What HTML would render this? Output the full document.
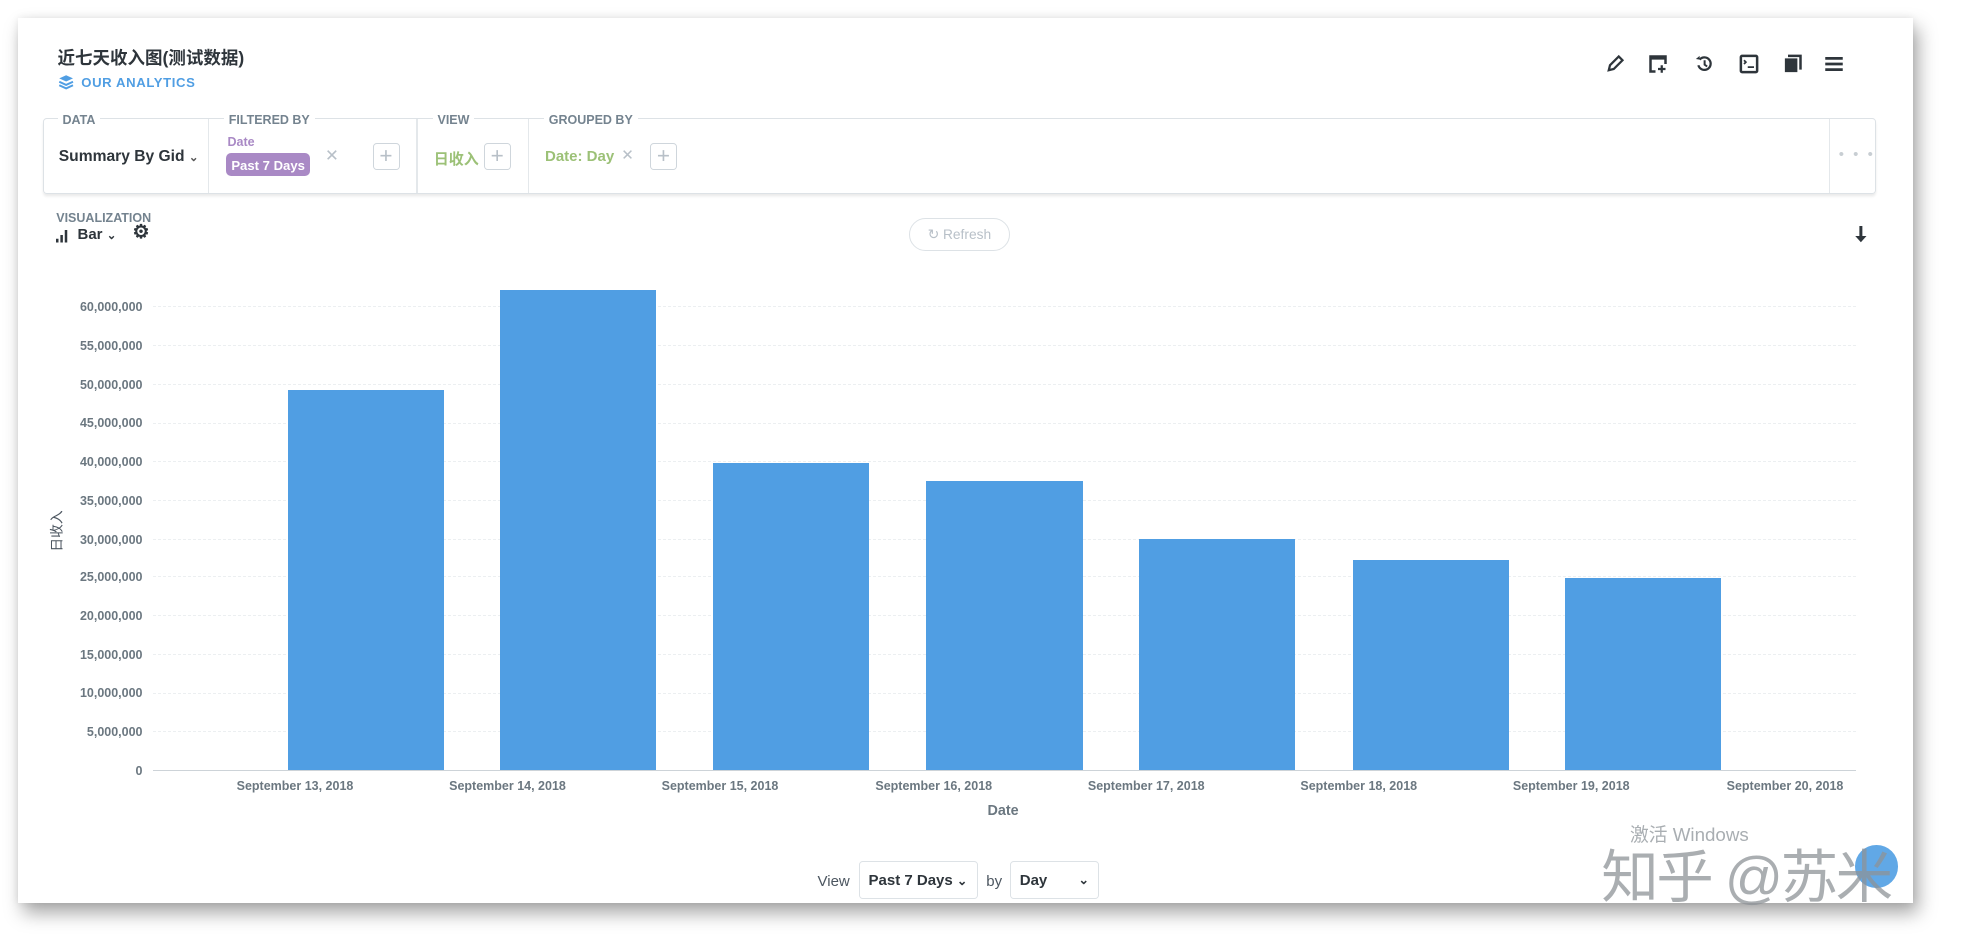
<!DOCTYPE html>
<html><head><meta charset="utf-8"><style>
html,body{margin:0;padding:0;background:#fff;width:1961px;height:951px;overflow:hidden}
#w{zoom:1.25;position:relative;width:1569px;height:761px;font-family:"Liberation Sans","Noto Sans CJK SC",sans-serif;color:#2e353b}
.a{position:absolute;white-space:nowrap}
.card{position:absolute;left:14px;top:14px;width:1516px;height:708px;background:#fff;box-shadow:4px 8px 14px rgba(0,0,0,.35),0 0 6px rgba(0,0,0,.08)}
.lbl{font-size:10px;font-weight:bold;color:#74838f;background:#fff;padding:0 4px}
.plus{position:absolute;width:20px;height:20px;border:1px solid #cfd6dc;border-radius:3px;color:#b8c0c8;font-size:18px;line-height:19px;text-align:center;background:#fff}
.yl{position:absolute;right:1455px;font-size:10px;font-weight:bold;color:#6b7780;text-align:right}
.xl{position:absolute;font-size:10px;font-weight:bold;color:#6b7780;transform:translateX(-50%);top:623px}
.bar{position:absolute;background:#509ee3;width:125px;bottom:145px}
.grid{position:absolute;left:122px;width:1363px;border-top:1px dashed #eceff1}
.ic{position:absolute;top:43px}
</style></head><body><div id="w">
<div class="card"></div>
<div class="a" style="left:46px;top:36px;font-size:14px;font-weight:bold;color:#2e353b">近七天收入图(测试数据)</div>
<svg class="a" style="left:46px;top:59px" width="13" height="13" viewBox="0 0 13 13"><path d="M6.5 1L12 3.5 6.5 6 1 3.5z" fill="#509ee3"/><path d="M1 6.2L6.5 8.7 12 6.2M1 9L6.5 11.5 12 9" stroke="#509ee3" stroke-width="1.6" fill="none"/></svg>
<div class="a" style="left:65px;top:60px;font-size:10.5px;font-weight:bold;color:#509ee3;letter-spacing:.5px">OUR ANALYTICS</div>
<svg class="ic" style="left:1284px" width="16" height="16" viewBox="0 0 16 16"><path d="M3 13l1-4 7-7 3 3-7 7z" fill="none" stroke="#2e353b" stroke-width="1.8"/></svg>
<svg class="ic" style="left:1318px" width="16" height="16" viewBox="0 0 16 16"><path d="M6 14H2V2h12v6" fill="none" stroke="#2e353b" stroke-width="2"/><path d="M2 3h12" stroke="#2e353b" stroke-width="3"/><path d="M11 9v6M8 12h6" stroke="#2e353b" stroke-width="1.8"/></svg>
<svg class="ic" style="left:1355px" width="16" height="16" viewBox="0 0 16 16"><path d="M3.5 9A5 5 0 1 0 4.5 4.5" fill="none" stroke="#2e353b" stroke-width="1.8"/><path d="M1.5 4l3 .5 0-3z" fill="#2e353b"/><path d="M8.5 5v3.5l2 1.5" fill="none" stroke="#2e353b" stroke-width="1.6"/></svg>
<svg class="ic" style="left:1391px" width="16" height="16" viewBox="0 0 16 16"><rect x="1.5" y="1.5" width="13" height="13" rx="1" fill="none" stroke="#2e353b" stroke-width="2"/><path d="M4 5l1.5 1.5L4 8M7 10.5h5" stroke="#2e353b" stroke-width="1.4" fill="none"/></svg>
<svg class="ic" style="left:1426px" width="16" height="16" viewBox="0 0 16 16"><path d="M1.5 3.5h10v11h-10z" fill="#2e353b"/><path d="M4 1.5h10v11" fill="none" stroke="#2e353b" stroke-width="2"/></svg>
<svg class="ic" style="left:1459px" width="16" height="16" viewBox="0 0 16 16"><path d="M1 3.5h14M1 8h14M1 12.5h14" stroke="#2e353b" stroke-width="2.2"/></svg>
<div class="a" style="left:34px;top:94px;width:1467px;height:61px;border:1px solid #dde2e6;border-radius:3px;box-shadow:0 2px 2px rgba(0,0,0,.08);box-sizing:border-box"></div>
<div class="a" style="left:166px;top:95px;width:1px;height:59px;background:#e4e8eb"></div>
<div class="a" style="left:333px;top:95px;width:1px;height:59px;background:#e4e8eb"></div>
<div class="a" style="left:422px;top:95px;width:1px;height:59px;background:#e4e8eb"></div>
<div class="a" style="left:1463px;top:95px;width:1px;height:59px;background:#e4e8eb"></div>
<div class="a lbl" style="left:46px;top:90px">DATA</div>
<div class="a lbl" style="left:179px;top:90px">FILTERED BY</div>
<div class="a lbl" style="left:346px;top:90px">VIEW</div>
<div class="a lbl" style="left:435px;top:90px">GROUPED BY</div>
<div class="a" style="left:47px;top:118px;font-size:12.5px;font-weight:bold;color:#2e353b">Summary By Gid <span style="font-size:9px;color:#555">⌄</span></div>
<div class="a" style="left:182px;top:108px;font-size:10px;font-weight:bold;color:#a989c5">Date</div>
<div class="a" style="left:181px;top:122px;width:67px;height:19px;background:#a989c5;border-radius:4px;color:#fff;font-size:10.5px;font-weight:bold;line-height:20px;text-align:center">Past 7 Days</div>
<div class="a" style="left:260px;top:117px;font-size:13px;color:#b8c0c8">✕</div>
<div class="plus" style="left:298px;top:114px">+</div>
<div class="a" style="left:347px;top:118px;font-size:12px;font-weight:bold;color:#9cc177">日收入</div>
<div class="plus" style="left:387px;top:114px">+</div>
<div class="a" style="left:436px;top:118px;font-size:12px;font-weight:bold;color:#9cc177">Date: Day</div>
<div class="a" style="left:497px;top:117px;font-size:12px;color:#b8c0c8">✕</div>
<div class="plus" style="left:520px;top:114px">+</div>
<div class="a" style="left:1471px;top:117px;font-size:12px;color:#c8ced3;letter-spacing:2px">• • •</div>
<div class="a" style="left:45px;top:169px;font-size:10px;font-weight:bold;color:#74838f">VISUALIZATION</div>
<svg class="a" style="left:45px;top:184px" width="10" height="10"><rect x="0" y="7" width="2" height="3" fill="#2e353b"/><rect x="3.5" y="4" width="2" height="6" fill="#2e353b"/><rect x="7" y="0" width="2" height="10" fill="#2e353b"/></svg>
<div class="a" style="left:62px;top:181px;font-size:12px;font-weight:bold">Bar <span style="font-size:9px">⌄</span></div>
<div class="a" style="left:106px;top:177px;font-size:15px;font-weight:bold">⚙</div>
<div class="a" style="left:727px;top:174px;width:81px;height:27px;border:1px solid #dde2e6;border-radius:14px;box-sizing:border-box;font-size:11px;color:#b8c0c8;line-height:25px;text-align:center">↻ Refresh</div>
<svg class="a" style="left:1483px;top:181px" width="11" height="14"><path d="M5.5 0v10" stroke="#2e353b" stroke-width="2.4"/><path d="M1 8l4.5 5 4.5-5z" fill="#2e353b"/></svg>
<div class="grid" style="top:245px"></div><div class="grid" style="top:276px"></div><div class="grid" style="top:307px"></div><div class="grid" style="top:338px"></div><div class="grid" style="top:369px"></div><div class="grid" style="top:400px"></div><div class="grid" style="top:431px"></div><div class="grid" style="top:461px"></div><div class="grid" style="top:492px"></div><div class="grid" style="top:523px"></div><div class="grid" style="top:554px"></div><div class="grid" style="top:585px"></div>
<div class="yl" style="top:240px">60,000,000</div><div class="yl" style="top:271px">55,000,000</div><div class="yl" style="top:302px">50,000,000</div><div class="yl" style="top:333px">45,000,000</div><div class="yl" style="top:364px">40,000,000</div><div class="yl" style="top:395px">35,000,000</div><div class="yl" style="top:426px">30,000,000</div><div class="yl" style="top:456px">25,000,000</div><div class="yl" style="top:487px">20,000,000</div><div class="yl" style="top:518px">15,000,000</div><div class="yl" style="top:549px">10,000,000</div><div class="yl" style="top:580px">5,000,000</div><div class="yl" style="top:611px">0</div>
<div class="a" style="left:28px;top:417px;font-size:11px;color:#4c5660;transform:rotate(-90deg)">日收入</div>
<div class="bar" style="left:230px;top:312px"></div>
<div class="bar" style="left:400px;top:232px"></div>
<div class="bar" style="left:570px;top:370px"></div>
<div class="bar" style="left:741px;top:385px"></div>
<div class="bar" style="left:911px;top:431px"></div>
<div class="bar" style="left:1082px;top:448px"></div>
<div class="bar" style="left:1252px;top:462px"></div>
<div class="a" style="left:122px;top:616px;width:1363px;height:1px;background:#cdd3d8"></div>
<div class="xl" style="left:236px">September 13, 2018</div><div class="xl" style="left:406px">September 14, 2018</div><div class="xl" style="left:576px">September 15, 2018</div><div class="xl" style="left:747px">September 16, 2018</div><div class="xl" style="left:917px">September 17, 2018</div><div class="xl" style="left:1087px">September 18, 2018</div><div class="xl" style="left:1257px">September 19, 2018</div><div class="xl" style="left:1428px">September 20, 2018</div>
<div class="a" style="left:790px;top:642px;font-size:11.5px;font-weight:bold;color:#6b7780">Date</div>
<div class="a" style="left:654px;top:698px;font-size:12px;color:#4c5660">View</div>
<div class="a" style="left:687px;top:689px;width:95px;height:30px;border:1px solid #dde2e6;border-radius:3px;box-sizing:border-box;font-size:12px;font-weight:bold;line-height:30px;padding-left:7px">Past 7 Days <span style="font-size:10px">⌄</span></div>
<div class="a" style="left:789px;top:698px;font-size:12px;color:#4c5660">by</div>
<div class="a" style="left:808px;top:689px;width:71px;height:30px;border:1px solid #dde2e6;border-radius:3px;box-sizing:border-box;font-size:12px;font-weight:bold;line-height:30px;padding-left:7px">Day<span style="position:absolute;right:7px;font-size:10px">⌄</span></div>
<div class="a" style="left:1484px;top:676px;width:34px;height:34px;border-radius:50%;background:#509ee3;opacity:.9"></div>
<div class="a" style="left:1304px;top:656px;font-size:15px;color:#a9aeb2">激活 Windows</div>
<div class="a" style="left:1281px;top:664px;font-size:46px;color:#8e9398;opacity:.75;letter-spacing:-2px">知乎 @苏米</div>
</div></body></html>
